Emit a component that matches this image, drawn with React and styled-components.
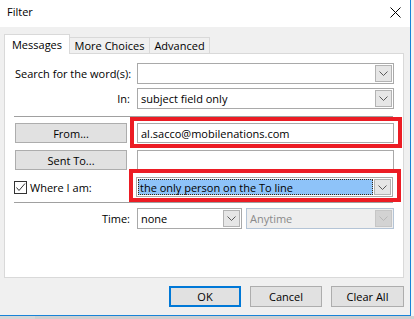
import styled, { createGlobalStyle } from "styled-components";

const GlobalStyle = createGlobalStyle`
  html, body {
    margin: 0;
    padding: 0;
  }
  body {
    width: 414px;
    height: 319px;
    overflow: hidden;
    background: #f0f0f0;
    font-family: "Open Sans", "Noto Sans", sans-serif;
    font-size: 11px;
    color: #000000;
  }
  * {
    box-sizing: border-box;
  }
`;

const Screen = styled.div`
  display: flex;
  flex-direction: column;
  width: 414px;
  height: 319px;
`;

const Desk = styled.div`
  display: flex;
`;

const Gutter = styled.div`
  flex: 1;
  background: #f3f3f3;
`;

const BottomStrip = styled.div`
  flex: 1;
  background: #cfcfcf;
  border-left: 35px solid #d6d6d6;
`;

const Window = styled.div`
  width: 411px;
  height: 316px;
  display: flex;
  flex-direction: column;
  background: #f0f0f0;
  border-right: 1px solid #1883d7;
  border-bottom: 1px solid #1883d7;
`;

const TitleBar = styled.div`
  height: 27px;
  display: flex;
  justify-content: space-between;
  align-items: flex-start;
  padding: 4px 9px 0 7px;
  background: #ffffff;
  font-size: 11px;
  line-height: 16px;
`;

const Body = styled.div`
  padding: 7px 0 0 4px;
`;

const TabStrip = styled.div`
  display: flex;
  align-items: flex-end;
  height: 19px;
`;

const Tab = styled.div`
  position: relative;
  z-index: ${(p) => (p.$active ? 1 : 0)};
  width: ${(p) => p.$w}px;
  height: ${(p) => (p.$active ? 20 : 16)}px;
  margin-bottom: ${(p) => (p.$active ? -1 : 0)}px;
  margin-left: ${(p) => (p.$first ? 0 : -1)}px;
  display: flex;
  justify-content: center;
  align-items: center;
  padding-top: ${(p) => (p.$active ? 0 : 1)}px;
  background: ${(p) => (p.$active ? "#ffffff" : "#f0f0f0")};
  border: 1px solid #d9d9d9;
  border-bottom: none;
  line-height: 14px;
`;

const Panel = styled.div`
  width: 400px;
  height: 225px;
  display: flex;
  flex-direction: column;
  padding: 9px 0 0 10px;
  background: #ffffff;
  border: 1px solid #d9d9d9;
`;

const Row = styled.div`
  display: flex;
  align-items: center;
  height: ${(p) => p.$h || 20}px;
  margin-top: ${(p) => p.$mt || 0}px;
`;

const Label = styled.div`
  width: 122px;
  padding-right: 7px;
  text-align: ${(p) => (p.$right ? "right" : "left")};
  white-space: nowrap;
`;

const Separator = styled.div`
  width: 379px;
  height: 1px;
  margin: ${(p) => p.$mt}px 0 0 -1px;
  background: #a0a0a0;
`;

const Field = styled.div`
  position: relative;
  width: ${(p) => p.$w || 257}px;
  height: 100%;
  display: flex;
  align-items: center;
  padding: 1px;
  background: ${(p) => (p.$disabled ? "#eeeeee" : "#ffffff")};
  border: 1px solid ${(p) => (p.$disabled ? "#b4c4d6" : "#a9a9a9")};
  color: ${(p) => (p.$disabled ? "#8a8a8a" : "#000000")};
  white-space: nowrap;
`;

const Value = styled.div`
  flex: 1;
  height: 100%;
  display: flex;
  align-items: center;
  padding-left: 2px;
  background: ${(p) => (p.$selected ? "#8ec3f9" : "transparent")};
  outline: ${(p) => (p.$selected ? "1px dotted #3c2a10" : "none")};
  outline-offset: -1px;
`;

const DropButton = styled.div`
  width: 17px;
  height: 100%;
  margin-left: 1px;
  display: flex;
  justify-content: center;
  align-items: center;
  background: ${(p) => (p.$disabled ? "#d3d3d3" : "#e6e6e6")};
  border: 1px solid ${(p) => (p.$disabled ? "#c6c6c6" : "#b3b3b3")};
`;

const Highlight = styled.div`
  position: absolute;
  top: ${(p) => p.$t}px;
  left: ${(p) => p.$l}px;
  right: ${(p) => p.$r}px;
  bottom: ${(p) => p.$b}px;
  border: 4px solid #ec1c24;
  pointer-events: none;
`;

const Button = styled.div`
  width: ${(p) => p.$w || 112}px;
  height: ${(p) => p.$h || 20}px;
  display: flex;
  justify-content: center;
  align-items: center;
  background: #e1e1e1;
  border: ${(p) => (p.$default ? "2px solid #0078d7" : "1px solid #adadad")};
`;

const CheckLabel = styled.label`
  width: 122px;
  display: flex;
  align-items: center;
  gap: 3px;
  padding-left: 0;
  margin-left: -1px;
`;

const CheckBox = styled.span`
  width: 13px;
  height: 13px;
  display: flex;
  justify-content: center;
  align-items: center;
  background: #ffffff;
  border: 1px solid #333333;
`;

const Footer = styled.div`
  display: flex;
  justify-content: flex-end;
  gap: 9px;
  margin-top: 8px;
  padding-right: 6px;
`;

function Chevron({ disabled }) {
  return (
    <svg width="9" height="5" viewBox="0 0 9 5">
      <path
        d="M0.5 0.5 L4.5 4.5 L8.5 0.5"
        fill="none"
        stroke={disabled ? "#b8b8b8" : "#5a5a5a"}
        strokeWidth="1"
      />
    </svg>
  );
}

function Combo({ value, w, disabled, selected, children }) {
  return (
    <Field $w={w} $disabled={disabled}>
      <Value $selected={selected}>{value}</Value>
      <DropButton $disabled={disabled}>
        <Chevron disabled={disabled} />
      </DropButton>
      {children}
    </Field>
  );
}

export default function App() {
  return (
    <Screen>
      <GlobalStyle />
      <Desk>
        <Window>
          <TitleBar>
            <span>Filter</span>
            <svg width="11" height="11" viewBox="0 0 11 11" style={{ marginTop: 3 }}>
              <path d="M0.5 0.5 L10.5 10.5 M10.5 0.5 L0.5 10.5" stroke="#000" strokeWidth="1" />
            </svg>
          </TitleBar>
          <Body>
            <TabStrip>
              <Tab $active $first $w={66}>Messages</Tab>
              <Tab $w={81}>More Choices</Tab>
              <Tab $w={61}>Advanced</Tab>
            </TabStrip>
            <Panel>
              <Row $h={21}>
                <Label>Search for the word(s):</Label>
                <Combo value="" />
              </Row>
              <Row $h={21} $mt={4}>
                <Label $right>In:</Label>
                <Combo value="subject field only" />
              </Row>
              <Separator $mt={7} />
              <Row $mt={6}>
                <Label>
                  <Button>From...</Button>
                </Label>
                <Field>
                  <Value>al.sacco@mobilenations.com</Value>
                  <Highlight $t={-7} $l={-8} $r={-9} $b={-6} />
                </Field>
              </Row>
              <Row $mt={7}>
                <Label>
                  <Button>Sent To...</Button>
                </Label>
                <Field />
              </Row>
              <Row $mt={7}>
                <CheckLabel>
                  <CheckBox>
                    <svg width="11" height="11" viewBox="0 0 11 11">
                      <path d="M1.5 5.5 L4 8.5 L10 1.5" fill="none" stroke="#333" strokeWidth="1" />
                    </svg>
                  </CheckBox>
                  Where I am:
                </CheckLabel>
                <Combo value="the only person on the To line" selected>
                  <Highlight $t={-9} $l={-8} $r={-9} $b={-6} />
                </Combo>
              </Row>
              <Separator $mt={5} />
              <Row $h={21} $mt={5}>
                <Label $right>Time:</Label>
                <Combo value="none" w={105} />
                <div style={{ width: 4 }} />
                <Combo value="Anytime" w={148} disabled />
              </Row>
            </Panel>
            <Footer>
              <Button $w={72} $h={21} $default>OK</Button>
              <Button $w={72} $h={21}>Cancel</Button>
              <Button $w={73} $h={21}>Clear All</Button>
            </Footer>
          </Body>
        </Window>
        <Gutter />
      </Desk>
      <BottomStrip />
    </Screen>
  );
}
